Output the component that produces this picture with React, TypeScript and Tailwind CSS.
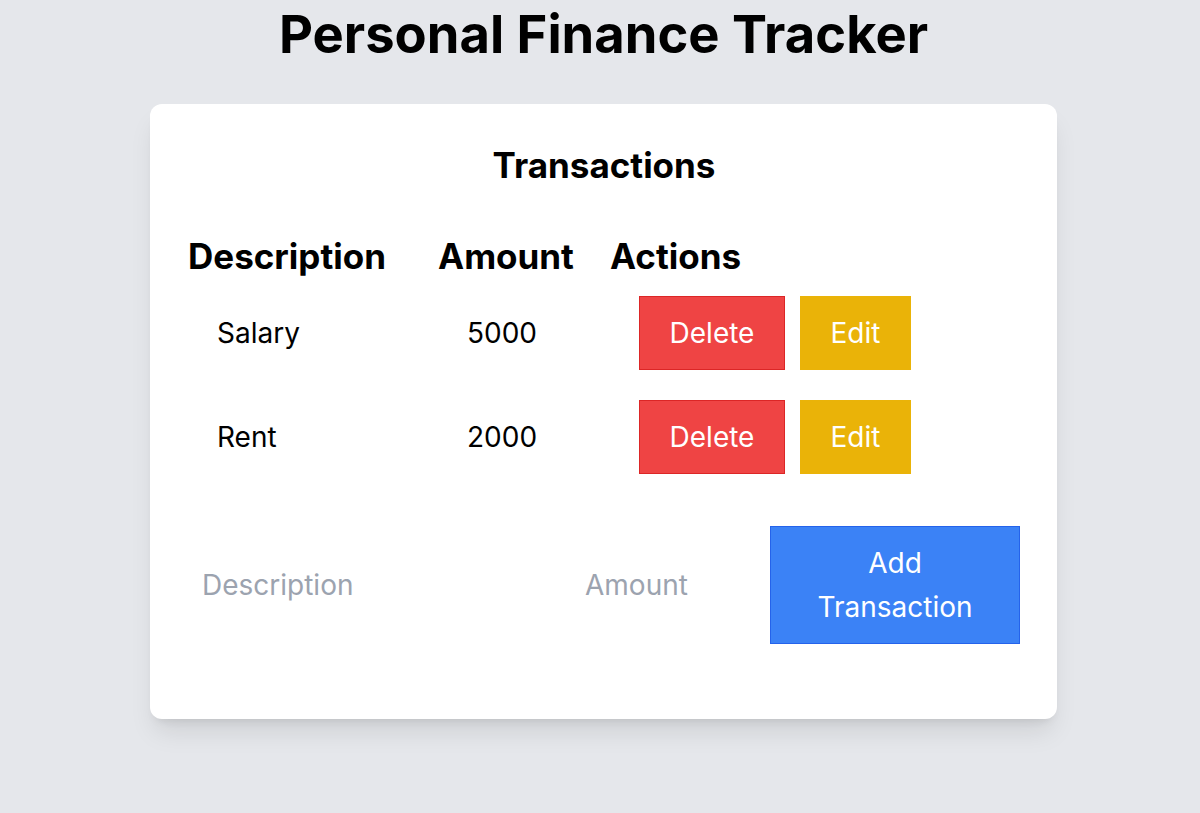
import React from "react";

const rows = [
  { d: "Salary", a: "5000" },
  { d: "Rent", a: "2000" },
];

export default function App() {
  return (
    <div
      className="min-h-screen bg-[#e5e7eb] text-black"
      style={{ fontFamily: "Inter, 'Noto Sans', sans-serif" }}
    >
      <div className="ml-[150px] w-[907px] pt-[3px]">
        <h1 className="text-center text-[52.5px] leading-[62px] font-bold">Personal Finance Tracker</h1>
        <div className="mt-[39px] rounded-xl bg-white pl-[38px] pr-[37px] pt-[39px] pb-[75px] shadow-[0_17px_26px_-5px_rgba(0,0,0,0.1),0_7px_10px_-6px_rgba(0,0,0,0.1)]">
          <h2 className="text-center text-[35px] leading-[44px] font-bold">Transactions</h2>
          <div className="mt-[45px]">
            <div className="grid grid-cols-[250px_172px_1fr] text-[35px] leading-[49px] font-bold">
              <div>Description</div>
              <div>Amount</div>
              <div>Actions</div>
            </div>
            {rows.map((r) => (
              <div key={r.d} className="grid grid-cols-[250px_172px_1fr] items-center py-[15px] text-[28px] leading-[42px]">
                <div className="pl-[29px]">{r.d}</div>
                <div className="pl-[29px]">{r.a}</div>
                <div className="flex gap-[15px] pl-[29px]">
                  <button className="h-[74px] w-[146px] border border-[#dc2626] bg-[#ef4444] text-white">Delete</button>
                  <button className="h-[74px] w-[111px] border border-[#eab308] bg-[#eab308] text-white">Edit</button>
                </div>
              </div>
            ))}
          </div>
          <div className="mt-[37px] flex items-center gap-[28px] text-[28px] leading-[42px]">
            <input
              className="w-[355px] px-[14px] py-[14px] outline-none placeholder:text-[#9ca3af]"
              placeholder="Description"
            />
            <input
              className="w-[171px] px-[14px] py-[14px] outline-none placeholder:text-[#9ca3af]"
              placeholder="Amount"
            />
            <button className="h-[118px] w-[250px] border border-[#2563eb] bg-[#3b82f6] leading-[44px] text-white">
              Add
              <br />
              Transaction
            </button>
          </div>
        </div>
      </div>
    </div>
  );
}
